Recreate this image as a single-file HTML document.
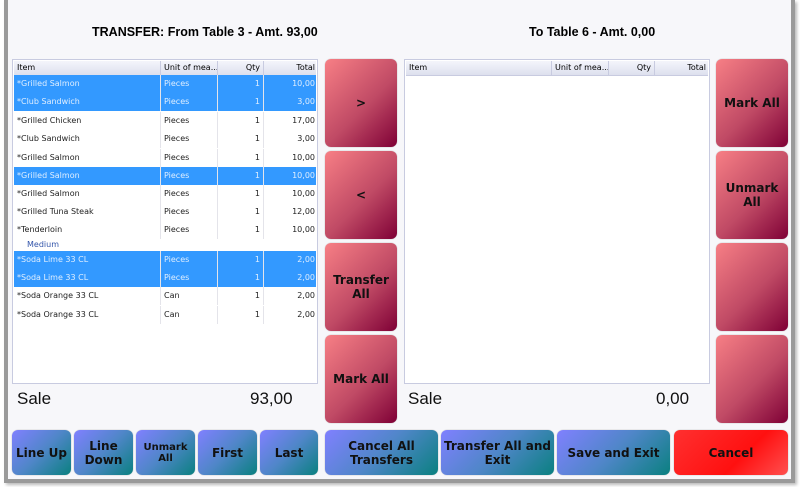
<!DOCTYPE html><html><head><style>
body{margin:0;width:800px;height:487px;background:#fff;font-family:"Liberation Sans","DejaVu Sans",sans-serif;position:relative;overflow:hidden}
.win{position:absolute;left:4px;top:0;width:791px;height:483px;background:#f7f7fa;border-left:4px solid #9a9a9a;border-right:4px solid #9a9a9a;border-bottom:4px solid #9a9a9a;box-sizing:border-box;box-shadow:2px 2px 3px #bbb}
.t{position:absolute;font-weight:bold;font-size:12.5px;top:25px}
.grid{position:absolute;top:59px;width:306px;height:325px;background:#fff;border:1px solid #c8cbe0;box-sizing:border-box;font-size:8px;font-family:"DejaVu Sans",sans-serif}
.hd{position:absolute;left:1px;right:1px;top:1px;height:14px;background:linear-gradient(#f4f5fb,#dde0ee);border-bottom:1px solid #c8cbe0}
.c{position:absolute;top:0;height:100%;box-sizing:border-box;padding:0 3px;line-height:14px;white-space:nowrap;overflow:hidden}
.row{position:absolute;left:1px;right:1px;height:18px;color:#222}
.row .c{line-height:18px;border-right:1px solid #e4e4ea}
.sel{background:#3399ff;color:#dfeeff}
.b{position:absolute;border-radius:6px;display:flex;align-items:center;justify-content:center;text-align:center;font-weight:bold;font-family:"DejaVu Sans",sans-serif;color:#111;box-shadow:0 0 1px #999}
.r{background:linear-gradient(135deg,#f77f85,#c04a65 55%,#7f0036);font-size:12px;width:72px;height:88px}
.bl{background:linear-gradient(135deg,#8080ff,#4f86c8 50%,#0a8080);font-size:12px;top:430px;height:45px}
.sale{position:absolute;top:389px;font-size:17px;color:#111}
</style></head><body>
<div class="win"></div>
<div class="t" style="left:92px">TRANSFER: From Table 3 - Amt. 93,00</div>
<div class="t" style="left:529px">To Table 6 - Amt. 0,00</div>

<div class="grid" style="left:12px">
<div class="hd"><div class="c" style="left:0;width:147px;border-right:1px solid #c8cbe0">Item</div><div class="c" style="left:147px;width:57px;border-right:1px solid #c8cbe0">Unit of mea...</div><div class="c" style="left:204px;width:46px;text-align:right;border-right:1px solid #c8cbe0">Qty</div><div class="c" style="left:250px;width:54px;text-align:right">Total</div></div>
<div class="row sel" style="top:15px"><div class="c" style="left:0;width:147px">*Grilled Salmon</div><div class="c" style="left:147px;width:57px">Pieces</div><div class="c" style="left:204px;width:46px;text-align:right">1</div><div class="c" style="left:250px;width:54px;text-align:right;border:0">10,00</div></div>
<div class="row sel" style="top:33px"><div class="c" style="left:0;width:147px">*Club Sandwich</div><div class="c" style="left:147px;width:57px">Pieces</div><div class="c" style="left:204px;width:46px;text-align:right">1</div><div class="c" style="left:250px;width:54px;text-align:right;border:0">3,00</div></div>
<div class="row" style="top:52px"><div class="c" style="left:0;width:147px">*Grilled Chicken</div><div class="c" style="left:147px;width:57px">Pieces</div><div class="c" style="left:204px;width:46px;text-align:right">1</div><div class="c" style="left:250px;width:54px;text-align:right;border:0">17,00</div></div>
<div class="row" style="top:70px"><div class="c" style="left:0;width:147px">*Club Sandwich</div><div class="c" style="left:147px;width:57px">Pieces</div><div class="c" style="left:204px;width:46px;text-align:right">1</div><div class="c" style="left:250px;width:54px;text-align:right;border:0">3,00</div></div>
<div class="row" style="top:89px"><div class="c" style="left:0;width:147px">*Grilled Salmon</div><div class="c" style="left:147px;width:57px">Pieces</div><div class="c" style="left:204px;width:46px;text-align:right">1</div><div class="c" style="left:250px;width:54px;text-align:right;border:0">10,00</div></div>
<div class="row sel" style="top:107px"><div class="c" style="left:0;width:147px">*Grilled Salmon</div><div class="c" style="left:147px;width:57px">Pieces</div><div class="c" style="left:204px;width:46px;text-align:right">1</div><div class="c" style="left:250px;width:54px;text-align:right;border:0">10,00</div></div>
<div class="row" style="top:125px"><div class="c" style="left:0;width:147px">*Grilled Salmon</div><div class="c" style="left:147px;width:57px">Pieces</div><div class="c" style="left:204px;width:46px;text-align:right">1</div><div class="c" style="left:250px;width:54px;text-align:right;border:0">10,00</div></div>
<div class="row" style="top:143px"><div class="c" style="left:0;width:147px">*Grilled Tuna Steak</div><div class="c" style="left:147px;width:57px">Pieces</div><div class="c" style="left:204px;width:46px;text-align:right">1</div><div class="c" style="left:250px;width:54px;text-align:right;border:0">12,00</div></div>
<div class="row" style="top:161px"><div class="c" style="left:0;width:147px">*Tenderloin</div><div class="c" style="left:147px;width:57px">Pieces</div><div class="c" style="left:204px;width:46px;text-align:right">1</div><div class="c" style="left:250px;width:54px;text-align:right;border:0">10,00</div></div>
<div class="row" style="top:179px;height:12px;color:#3355aa"><div class="c" style="left:10px;width:137px;line-height:12px;border:0">Medium</div></div>
<div class="row sel" style="top:191px"><div class="c" style="left:0;width:147px">*Soda Lime 33 CL</div><div class="c" style="left:147px;width:57px">Pieces</div><div class="c" style="left:204px;width:46px;text-align:right">1</div><div class="c" style="left:250px;width:54px;text-align:right;border:0">2,00</div></div>
<div class="row sel" style="top:209px"><div class="c" style="left:0;width:147px">*Soda Lime 33 CL</div><div class="c" style="left:147px;width:57px">Pieces</div><div class="c" style="left:204px;width:46px;text-align:right">1</div><div class="c" style="left:250px;width:54px;text-align:right;border:0">2,00</div></div>
<div class="row" style="top:227px"><div class="c" style="left:0;width:147px">*Soda Orange 33 CL</div><div class="c" style="left:147px;width:57px">Can</div><div class="c" style="left:204px;width:46px;text-align:right">1</div><div class="c" style="left:250px;width:54px;text-align:right;border:0">2,00</div></div>
<div class="row" style="top:246px"><div class="c" style="left:0;width:147px">*Soda Orange 33 CL</div><div class="c" style="left:147px;width:57px">Can</div><div class="c" style="left:204px;width:46px;text-align:right">1</div><div class="c" style="left:250px;width:54px;text-align:right;border:0">2,00</div></div>
</div>

<div class="grid" style="left:404px">
<div class="hd"><div class="c" style="left:0;width:146px;border-right:1px solid #c8cbe0">Item</div><div class="c" style="left:146px;width:57px;border-right:1px solid #c8cbe0">Unit of mea...</div><div class="c" style="left:203px;width:46px;text-align:right;border-right:1px solid #c8cbe0">Qty</div><div class="c" style="left:249px;width:54px;text-align:right">Total</div></div>
</div>

<div class="sale" style="left:17px">Sale</div><div class="sale" style="left:250px">93,00</div>
<div class="sale" style="left:408px">Sale</div><div class="sale" style="left:656px">0,00</div>

<div class="b r" style="left:325px;top:59px">&gt;</div>
<div class="b r" style="left:325px;top:151px">&lt;</div>
<div class="b r" style="left:325px;top:243px">Transfer<br>All</div>
<div class="b r" style="left:325px;top:335px">Mark All</div>
<div class="b r" style="left:716px;top:59px">Mark All</div>
<div class="b r" style="left:716px;top:151px">Unmark<br>All</div>
<div class="b r" style="left:716px;top:243px"></div>
<div class="b r" style="left:716px;top:335px"></div>

<div class="b bl" style="left:12px;width:59px">Line Up</div>
<div class="b bl" style="left:74px;width:59px">Line<br>Down</div>
<div class="b bl" style="left:136px;width:59px;font-size:10px">Unmark<br>All</div>
<div class="b bl" style="left:198px;width:59px">First</div>
<div class="b bl" style="left:260px;width:58px">Last</div>
<div class="b bl" style="left:325px;width:113px">Cancel All<br>Transfers</div>
<div class="b bl" style="left:441px;width:113px">Transfer All and<br>Exit</div>
<div class="b bl" style="left:557px;width:113px">Save and Exit</div>
<div class="b bl" style="left:674px;width:114px;background:linear-gradient(135deg,#ff3030,#ff1010 60%,#ff5050)">Cancel</div>
</body></html>
